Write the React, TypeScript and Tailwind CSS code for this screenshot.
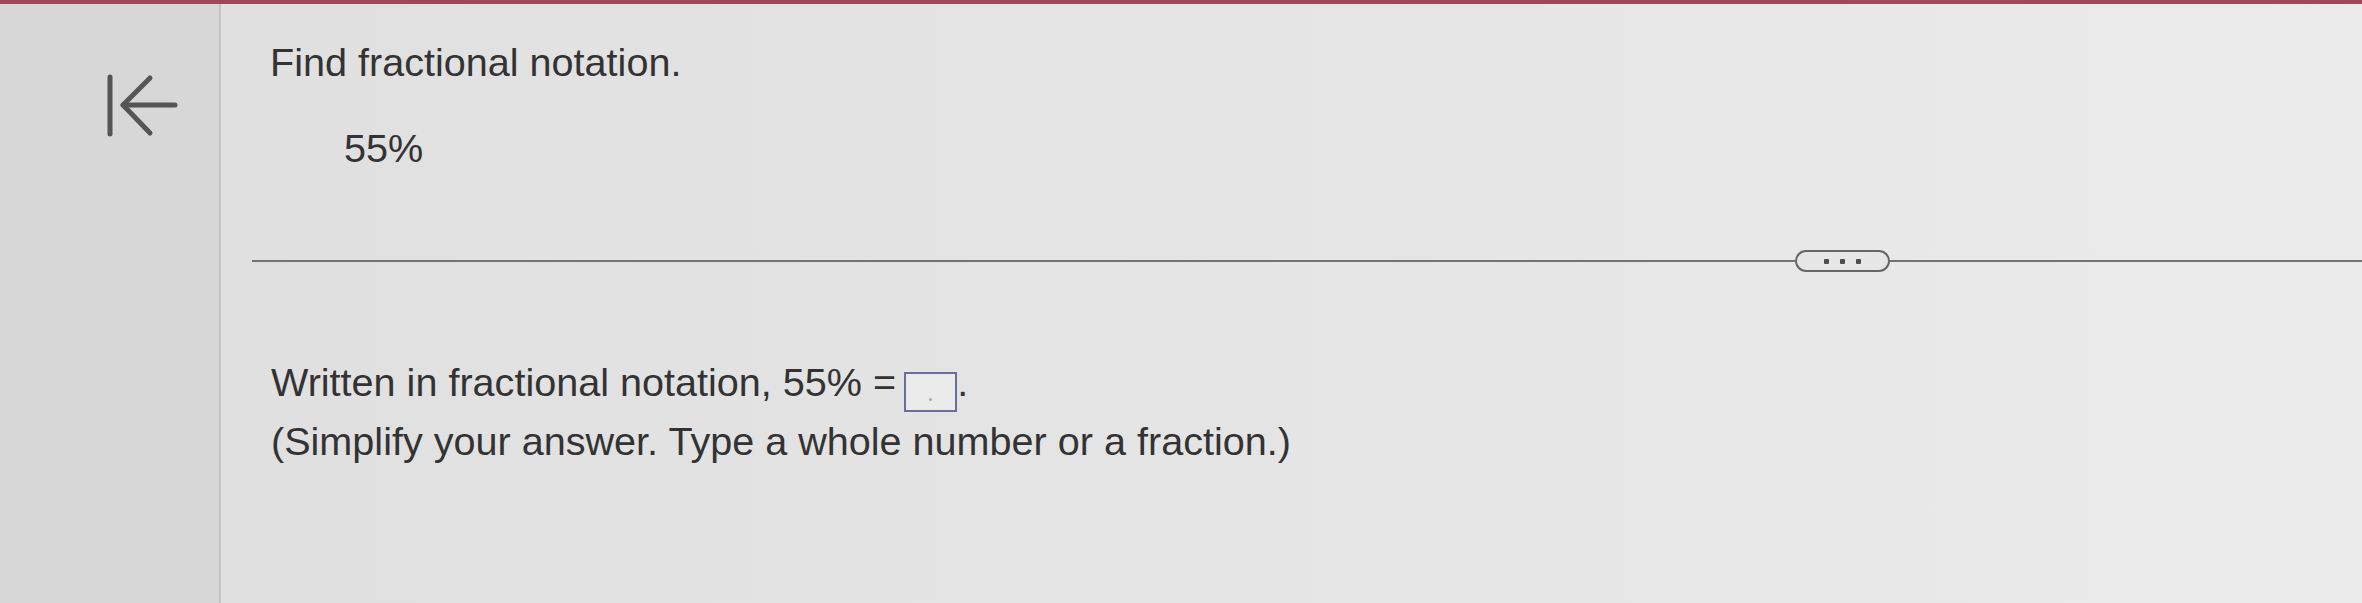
const BackIcon = () => (
  <svg width="80" height="70" viewBox="0 0 80 70" fill="none" stroke="#555555" strokeWidth="5" strokeLinecap="round" strokeLinejoin="round">
    <path d="M11 7 V64" />
    <path d="M24 35 H76" />
    <path d="M51 8 L24 35 L51 63" />
  </svg>
)

const Divider = () => (
  <div className="ml-[31px] mt-[79px] flex h-[22px] items-center">
    <div className="h-[2px] w-[1543px] bg-[#737373]" />
    <button className="flex h-[22px] w-[95px] items-center justify-center gap-[11px] rounded-full border-2 border-[#666666] bg-[#e6e6e6]">
      <span className="h-[5px] w-[5px] rounded-[1px] bg-[#4d4d4d]" />
      <span className="h-[5px] w-[5px] rounded-[1px] bg-[#4d4d4d]" />
      <span className="h-[5px] w-[5px] rounded-[1px] bg-[#4d4d4d]" />
    </button>
    <div className="h-[2px] flex-1 bg-[#737373]" />
  </div>
)

const App = () => {
  return (
    <div className="flex h-[603px] w-[2362px] flex-col overflow-hidden font-['Liberation_Sans',Arial,sans-serif] text-[#333333]">
      <div className="h-[4px] w-full bg-[#a2475a]" />
      <div className="flex flex-1">
        <div className="w-[221px] shrink-0 border-r-2 border-[#c4c4c4] bg-[#d7d7d7] pl-[99px] pt-[66px]">
          <BackIcon />
        </div>
        <div className="flex-1 bg-gradient-to-r from-[#e0e0e0] via-[#e5e5e5] to-[#ebebeb] pt-[35px]">
          <div className="pl-[49px] text-[39.6px] leading-[46px]">Find fractional notation.</div>
          <div className="mt-[40px] pl-[123px] text-[39.6px] leading-[46px]">55%</div>

          <Divider />

          <div className="mt-[87px] pl-[50px] text-[39.6px] leading-[46px]">
            <div className="h-[59px]">
              Written in fractional notation, 55% =
              <span className="relative ml-[8px] inline-block h-[40px] w-[53px] border-2 border-[#6a6e98] bg-[#ebebeb] align-[-16px]">
                <span className="absolute left-[23px] top-[24px] h-[3px] w-[3px] rounded-full bg-[#aaaaaa]" />
              </span>
              .
            </div>
            <div>(Simplify your answer. Type a whole number or a fraction.)</div>
          </div>
        </div>
      </div>
    </div>
  )
}

export default App
